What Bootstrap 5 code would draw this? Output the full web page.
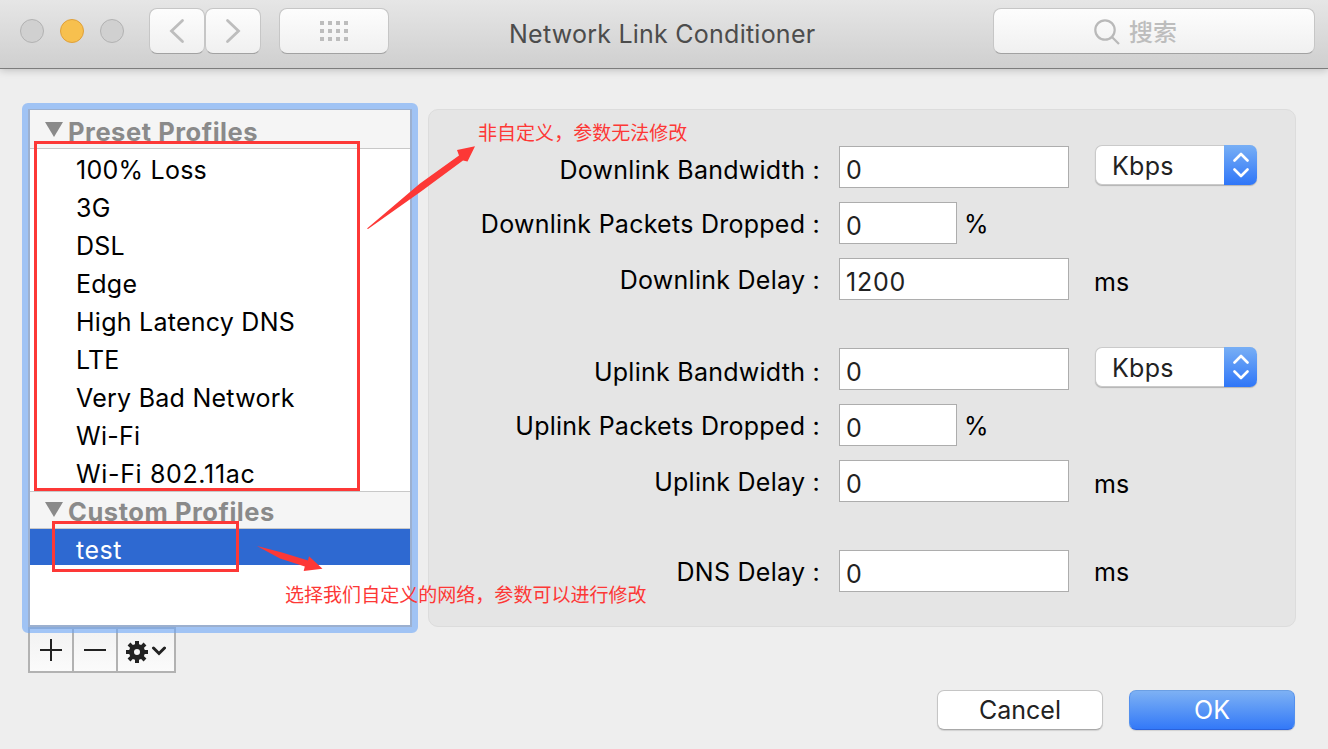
<!DOCTYPE html>
<html lang="en">
<head>
    <meta charset="UTF-8">
    <meta name="viewport" content="width=device-width, initial-scale=1.0">
    <title>Network Link Conditioner</title>
    <link href="https://cdn.jsdelivr.net/npm/bootstrap@5.3.0/dist/css/bootstrap.min.css" rel="stylesheet">
    <style>
        body {
            width: 1328px;
            height: 749px;
            overflow: hidden;
            background-color: #eee;
            color: #000;
            font-family: Inter, "Noto Sans CJK SC", sans-serif;
            font-size: 25px;
            line-height: 38px;
        }
        .titlebar {
            height: 69px;
            padding: 8px 13px 0 20px;
            background: linear-gradient(#e6e6e6, #cfcfcf);
            border-bottom: 1px solid #7c7c7c;
            box-shadow: 0 1px 8px rgba(0,0,0,0.22);
        }
        .lights { gap: 16px; }
        .light {
            width: 24px;
            height: 24px;
            margin-top: 11px;
            border-radius: 50%;
            background: #d0d0d0;
            border: 1px solid #b2b2b2;
        }
        .light-min {
            background: #f7c04e;
            border-color: #dfa03a;
        }
        .tool-group { margin-left: 25px; }
        .tool-btn {
            height: 46px;
            padding: 0;
            border: 1px solid #c6c6c6;
            border-bottom-color: #a2a2a2;
            border-radius: 8px;
            background: linear-gradient(#fdfdfd, #f0f0f0);
        }
        .tool-nav { width: 56px; }
        .tool-grid { width: 110px; margin-left: 18px; }
        .window-title {
            padding-left: 120px;
            color: #4c4c4c;
            letter-spacing: 0.24px;
            line-height: 52px;
        }
        .search-box {
            width: 322px;
            color: #bdbdbd;
            font-size: 24px;
            font-weight: 500;
        }
        .search-box svg { margin: 2px 9px 0 100px; }
        .search-box span { padding-top: 4px; }
        .main-area { padding: 40px 32px 0 28px; }
        .side { width: 384px; }
        .profiles {
            position: relative;
            z-index: 1;
            height: 518px;
            border: 1px solid #9cb0cf;
            border-width: 1px 2px 2px;
            background: #fff;
        }
        .profiles::after {
            content: "";
            position: absolute;
            inset: -7px -8px -8px;
            border: 6px solid rgba(108,166,248,0.6);
            border-radius: 6px;
            pointer-events: none;
        }
        .group-head {
            height: 39px;
            padding-left: 15px;
            background: #f5f5f5;
            border-bottom: 1px solid #c8c8c8;
            color: #8a8a8a;
            font-size: 25.5px;
            font-weight: 700;
            letter-spacing: 0.55px;
            line-height: 43px;
        }
        .group-head svg { margin: 12px 5px 0 0; }
        .group-head.custom {
            height: 38px;
            border-top: 1px solid #c8c8c8;
            line-height: 40px;
        }
        .group-head.custom svg { margin-top: 10px; }
        .profile {
            height: 38px;
            padding-left: 46px;
            letter-spacing: 0.25px;
            line-height: 43px;
        }
        .profile.wide { letter-spacing: 0.65px; }
        .profile.selected {
            height: 36px;
            background: #2e69d1;
            color: #fff;
            letter-spacing: 0.5px;
        }
        .mini-bar {
            width: 148px;
            height: 46px;
            border: 2px solid #b2b2b2;
            background: linear-gradient(#f2f2f2, #fbfbfb);
        }
        .mini-bar > div { width: 44px; border-right: 2px solid #b2b2b2; }
        .mini-bar > div:last-child { width: 56px; border: 0; }
        .panel {
            height: 518px;
            padding-top: 36px;
            background: #e5e5e5;
            border: 1px solid #dcdcdc;
            border-radius: 10px;
        }
        .field-row { height: 42px; margin-bottom: 14px; }
        .field-row.last-in-group { margin-bottom: 48px; }
        .field-label {
            width: 391px;
            margin-right: 19px;
            letter-spacing: 0.26px;
            text-align: right;
            line-height: 44px;
        }
        .field-row.bandwidth .field-label { line-height: 48px; }
        .field-row .form-control {
            width: 230px;
            height: 42px;
            padding: 5px 6px 0;
            border: 1px solid #adadad;
            border-radius: 0;
            color: #222;
            font-size: 25px;
            letter-spacing: 0.8px;
            line-height: 36px;
        }
        .field-row .form-control.short { width: 118px; }
        .unit { margin-left: 25px; line-height: 48px; }
        .unit.dns { line-height: 44px; }
        .unit-pct { margin-left: 7px; line-height: 44px; }
        .unit-select {
            width: 162px;
            height: 40px;
            margin: -1px 0 0 26px;
            border: 1px solid #cacaca;
            border-right: 0;
            border-radius: 7px;
            background: #fff;
            box-shadow: 0 1px 1px rgba(0,0,0,0.22);
            color: #222;
            letter-spacing: 0.3px;
            line-height: 40px;
        }
        .unit-select .unit-name { padding-left: 16px; }
        .unit-select .arrows {
            width: 33px;
            margin: -1px 0;
            border-radius: 0 7px 7px 0;
            background: linear-gradient(#78aff5, #2f76f8);
        }
        .dialog-btn {
            width: 166px;
            height: 40px;
            padding: 0;
            border: 1px solid #c5c5c5;
            border-bottom-color: #a8a8a8;
            border-radius: 7px;
            background: #fff;
            box-shadow: 0 1px 1px rgba(0,0,0,0.12);
            color: #222;
            font-size: 25px;
            line-height: 38px;
        }
        .dialog-btn.ok {
            border-color: #6b9fe4 #5390ee #2a62dc;
            background: linear-gradient(#7db1f4, #3379f8);
            color: #fff;
        }
        .dialog-actions { gap: 26px; padding: 17px 33px 0 0; }
        .notes { z-index: 5; color: #fd3836; font-size: 19.05px; line-height: 24px; }
        .notes span { position: absolute; white-space: nowrap; }
        .note-preset { left: 478px; top: 122px; }
        .note-custom { left: 285px; top: 584px; }
    </style>
</head>
<body class="position-relative">
    <header class="titlebar d-flex">
        <div class="lights d-flex">
            <div class="light"></div>
            <div class="light light-min"></div>
            <div class="light"></div>
        </div>
        <div class="tool-group d-flex">
            <button class="tool-btn tool-nav d-flex align-items-center justify-content-center">
                <svg width="16" height="26" fill="none" stroke="#bdbdbd" stroke-width="2.800" stroke-linecap="round"><path d="M13.500 2.500 2.500 13l11 10.500"/></svg>
            </button>
            <button class="tool-btn tool-nav d-flex align-items-center justify-content-center">
                <svg width="16" height="26" fill="none" stroke="#bdbdbd" stroke-width="2.800" stroke-linecap="round"><path d="M2.500 2.500 13.500 13l-11 10.500"/></svg>
            </button>
            <button class="tool-btn tool-grid d-flex align-items-center justify-content-center">
                <svg width="28" height="20" stroke="#bdbdbd" stroke-width="4" stroke-dasharray="4 4"><path d="M0 2h28M0 10h28M0 18h28"/></svg>
            </button>
        </div>
        <div class="window-title">Network Link Conditioner</div>
        <div class="search-box tool-btn ms-auto d-flex align-items-center">
            <svg width="26" height="26" class="flex-shrink-0" fill="none" stroke="#b9b9b9" stroke-width="2.200"><circle cx="11" cy="11" r="9.700"/><path d="m18 18 7 7"/></svg>
            <span>搜索</span>
        </div>
    </header>

    <main class="main-area d-flex align-items-start gap-3">
        <div class="side flex-shrink-0">
            <div class="profiles">
                <div class="group-head d-flex align-items-start"><svg width="18" height="15" fill="#8a8a8a"><path d="M0 0h18L9 15z"/></svg>Preset Profiles</div>
                <div class="profile">100% Loss</div>
                <div class="profile">3G</div>
                <div class="profile">DSL</div>
                <div class="profile">Edge</div>
                <div class="profile">High Latency DNS</div>
                <div class="profile">LTE</div>
                <div class="profile">Very Bad Network</div>
                <div class="profile">Wi-Fi</div>
                <div class="profile wide">Wi-Fi 802.11ac</div>
                <div class="group-head custom d-flex align-items-start"><svg width="18" height="15" fill="#8a8a8a"><path d="M0 0h18L9 15z"/></svg>Custom Profiles</div>
                <div class="profile selected">test</div>
            </div>
            <div class="mini-bar d-flex">
                <div class="d-flex align-items-center justify-content-center">
                    <svg width="22" height="22" stroke="#222" stroke-width="2"><path d="M11 0v22M0 11h22"/></svg>
                </div>
                <div class="d-flex align-items-center justify-content-center">
                    <svg width="22" height="22" stroke="#222" stroke-width="2"><path d="M0 11h22"/></svg>
                </div>
                <div class="d-flex align-items-center justify-content-center">
                    <svg width="40" height="22" class="mt-1">
                        <g transform="translate(11 11)" fill="none" stroke="#222">
                            <circle r="5.500" stroke-width="5"/>
                            <path stroke-width="4" d="M0-11v5M0 6v5M-11 0h5M6 0h5M-8-8l3.400 3.400M4.600 4.600 8 8M8-8 4.600-4.600M-4.600 4.600-8 8"/>
                        </g>
                        <path d="m27.500 7 5.500 5.500L38.500 7" fill="none" stroke="#222" stroke-width="3" stroke-linecap="round"/>
                    </svg>
                </div>
            </div>
        </div>

        <div class="panel flex-grow-1">
            <div class="field-row bandwidth d-flex">
                <div class="field-label">Downlink Bandwidth :</div>
                <input class="form-control" value="0">
                <div class="unit-select d-flex">
                    <span class="unit-name flex-grow-1">Kbps</span>
                    <span class="arrows d-flex align-items-center justify-content-center"><svg width="16" height="26" fill="none" stroke="#fff" stroke-width="2.600" stroke-linecap="round" stroke-linejoin="round"><path d="m1.500 8.500 6.500-6.500 6.500 6.500M1.500 17.500 8 24l6.500-6.500"/></svg></span>
                </div>
            </div>
            <div class="field-row d-flex">
                <div class="field-label">Downlink Packets Dropped :</div>
                <input class="form-control short" value="0">
                <div class="unit-pct">%</div>
            </div>
            <div class="field-row last-in-group d-flex">
                <div class="field-label">Downlink Delay :</div>
                <input class="form-control" value="1200">
                <div class="unit">ms</div>
            </div>
            <div class="field-row bandwidth d-flex">
                <div class="field-label">Uplink Bandwidth :</div>
                <input class="form-control" value="0">
                <div class="unit-select d-flex">
                    <span class="unit-name flex-grow-1">Kbps</span>
                    <span class="arrows d-flex align-items-center justify-content-center"><svg width="16" height="26" fill="none" stroke="#fff" stroke-width="2.600" stroke-linecap="round" stroke-linejoin="round"><path d="m1.500 8.500 6.500-6.500 6.500 6.500M1.500 17.500 8 24l6.500-6.500"/></svg></span>
                </div>
            </div>
            <div class="field-row d-flex">
                <div class="field-label">Uplink Packets Dropped :</div>
                <input class="form-control short" value="0">
                <div class="unit-pct">%</div>
            </div>
            <div class="field-row last-in-group d-flex">
                <div class="field-label">Uplink Delay :</div>
                <input class="form-control" value="0">
                <div class="unit">ms</div>
            </div>
            <div class="field-row d-flex">
                <div class="field-label">DNS Delay :</div>
                <input class="form-control" value="0">
                <div class="unit dns">ms</div>
            </div>
        </div>
    </main>

    <footer class="dialog-actions d-flex justify-content-end">
        <button class="btn dialog-btn">Cancel</button>
        <button class="btn dialog-btn ok">OK</button>
    </footer>

    <!-- annotations drawn over the window -->
    <div class="notes position-absolute top-0 start-0 pe-none">
        <svg class="d-block" width="1328" height="749" fill="#fd3836">
            <g fill="none" stroke="#fd3836" stroke-width="3">
                <rect x="35.500" y="142.500" width="323" height="347"/>
                <rect x="53.500" y="522.500" width="184" height="48"/>
            </g>
            <path d="M367 228.500 420 183.500 459 155.500 457 150 475 146.300 467.500 161.500 463 160.500 421 191.500 368 229z"/>
            <path d="M257 546 282 552.500 308 560.500 309 556.300 322.500 568.700 303.700 571 304.800 566.500 280 558.500z"/>
        </svg>
        <span class="note-preset">非自定义，参数无法修改</span>
        <span class="note-custom">选择我们自定义的网络，参数可以进行修改</span>
    </div>

    <script src="https://cdn.jsdelivr.net/npm/bootstrap@5.3.0/dist/js/bootstrap.bundle.min.js"></script>
</body>
</html>
